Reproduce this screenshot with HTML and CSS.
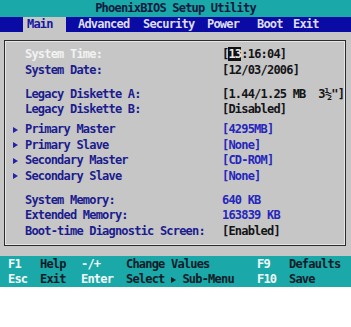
FILE: index.html
```html
<!DOCTYPE html>
<html>
<head>
<meta charset="utf-8">
<link rel="stylesheet" href="styles.css">
</head>
<body>
<div class="screen">
  <div class="title">PhoenixBIOS Setup Utility</div>
  <div class="menu">
    <div class="mi"><span class="tab">Main</span></div>
    <div class="mi">Advanced</div>
    <div class="mi">Security</div>
    <div class="mi">Power</div>
    <div class="mi">Boot</div>
    <div class="mi">Exit</div>
  </div>
  <div class="body">
    <div class="panel">
      <div class="row sel"><span></span><span class="lbl">System Time:</span><span class="val dark">[<span class="hl">13</span>:16:04]</span></div>
      <div class="row"><span></span><span class="lbl">System Date:</span><span class="val dark">[12/03/2006]</span></div>
      <div class="row gap-l"><span></span><span class="lbl">Legacy Diskette A:</span><span class="val dark">[1.44/1.25 MB  3½"]</span></div>
      <div class="row"><span></span><span class="lbl">Legacy Diskette B:</span><span class="val dark">[Disabled]</span></div>
      <div class="row gap-s"><span class="arr"></span><span class="lbl">Primary Master</span><span class="val blue">[4295MB]</span></div>
      <div class="row"><span class="arr"></span><span class="lbl">Primary Slave</span><span class="val blue">[None]</span></div>
      <div class="row"><span class="arr"></span><span class="lbl">Secondary Master</span><span class="val blue">[CD-ROM]</span></div>
      <div class="row"><span class="arr"></span><span class="lbl">Secondary Slave</span><span class="val blue">[None]</span></div>
      <div class="row gap-l"><span></span><span class="lbl">System Memory:</span><span class="val blue">640 KB</span></div>
      <div class="row"><span></span><span class="lbl">Extended Memory:</span><span class="val blue">163839 KB</span></div>
      <div class="row"><span></span><span class="lbl">Boot-time Diagnostic Screen:</span><span class="val dark">[Enabled]</span></div>
    </div>
  </div>
  <div class="footer">
    <span class="key">F1</span><span class="desc">Help</span><span class="key">-/+</span><span class="desc">Change Values</span><span class="key">F9</span><span class="desc">Defaults</span>
    <span class="key">Esc</span><span class="desc">Exit</span><span class="key">Enter</span><span class="desc">Select <span class="farr"></span> Sub-Menu</span><span class="key">F10</span><span class="desc">Save</span>
  </div>
</div>
</body>
</html>
```

FILE: styles.css
```css
html, body {
  margin: 0;
  padding: 0;
  background: #ffffff;
}
.screen {
  width: 351px;
  font-family: "DejaVu Sans Mono", "Liberation Mono", monospace;
  font-weight: bold;
  font-size: 12px;
  letter-spacing: -0.8px;
}
.title {
  height: 17px;
  line-height: 17px;
  background: #1aa8a8;
  color: #0c1a40;
  text-align: center;
}
.menu {
  height: 15px;
  line-height: 15px;
  background: #0a0aa4;
  color: #dcdcf4;
  display: grid;
  grid-template-columns: 55px 65px 64px 50px 36px auto;
  padding-left: 23px;
}
.tab {
  display: inline-block;
  width: 39px;
  padding-left: 4px;
  background: #c6c6c6;
  color: #1818a0;
}
.body {
  height: 224px;
  background: #c6c6c6;
  padding: 8px 5px 10px 4px;
  box-sizing: border-box;
  display: flex;
  flex-direction: column;
}
.panel {
  flex: 1;
  border: 1px solid #2c2c2c;
  box-shadow: inset 1px 1px 0 #e6e6e6, inset -1px -1px 0 #e6e6e6;
  padding-top: 6px;
  display: flex;
  flex-direction: column;
}
.row {
  display: grid;
  grid-template-columns: 20px 197px auto;
  height: 15.5px;
  line-height: 15.5px;
  color: #1c1c8e;
  align-items: center;
}
.val {
  white-space: pre;
}
.row.sel .lbl {
  color: #f2f2f2;
}
.gap-l {
  margin-top: 8.5px;
}
.gap-s {
  margin-top: 4.5px;
}
.arr {
  width: 0;
  height: 0;
  margin-left: 8px;
  border-left: 5px solid #2424a4;
  border-top: 3.5px solid transparent;
  border-bottom: 3.5px solid transparent;
}
.val.dark {
  color: #141418;
}
.val.blue {
  color: #2626bc;
}
.hl {
  background: #111111;
  color: #e8e8e8;
}
.footer {
  height: 31px;
  background: #1aa8a8;
  display: grid;
  grid-template-columns: 32px 41px 45px 131px 32px auto;
  grid-auto-rows: 15px;
  padding: 1px 0 0 8px;
  box-sizing: border-box;
  line-height: 15px;
}
.key {
  color: #f2f8f8;
}
.desc {
  color: #0e1c28;
  white-space: nowrap;
}
.farr {
  display: inline-block;
  width: 0;
  height: 0;
  border-left: 5px solid #0e1c28;
  border-top: 3.5px solid transparent;
  border-bottom: 3.5px solid transparent;
  vertical-align: 0px;
}
```
